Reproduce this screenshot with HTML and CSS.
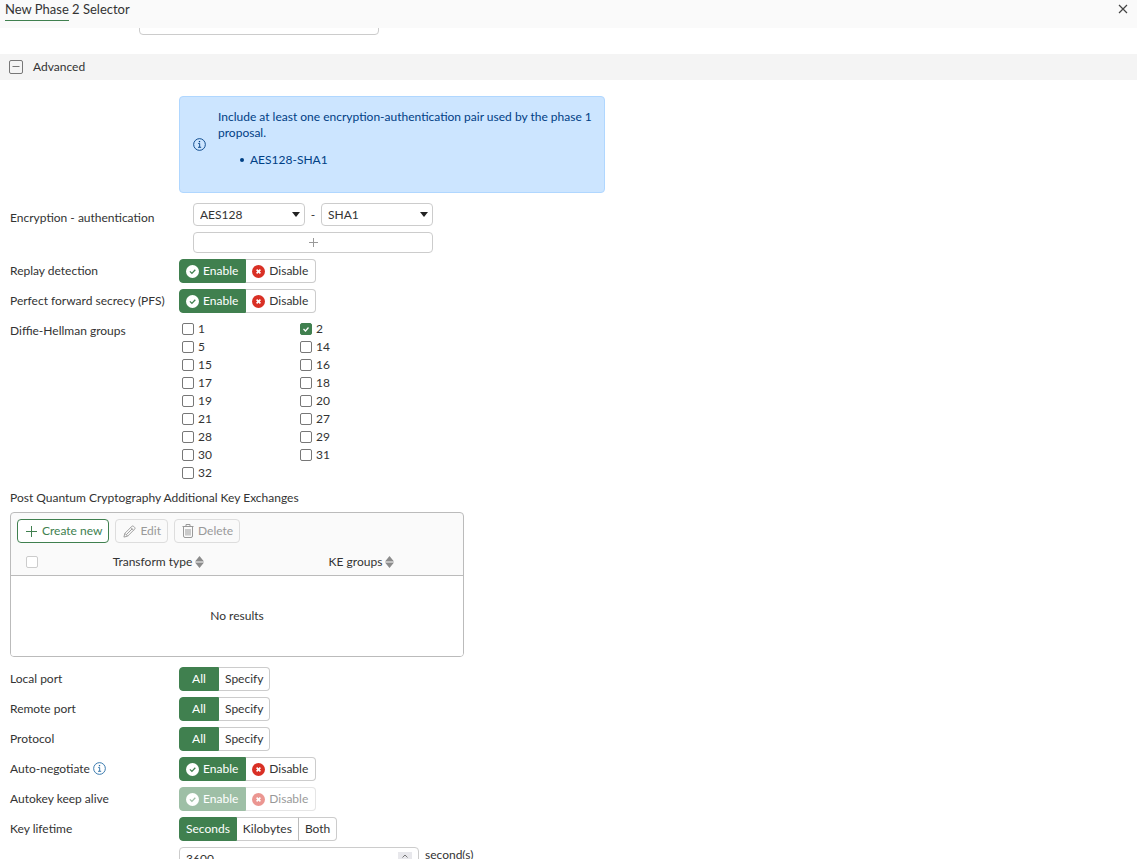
FILE: index.html
```html
<!DOCTYPE html>
<html lang="en">
<head>
<meta charset="utf-8">
<title>New Phase 2 Selector</title>
<link rel="stylesheet" href="styles.css">
</head>
<body>
<svg class="sprite" aria-hidden="true">
  <symbol id="i-ok" viewBox="0 0 13 13"><circle cx="6.5" cy="6.5" r="6.5" fill="#fff"/><path d="M3.9 6.4l2 2 3.400-3.600" fill="none" stroke="#40804f" stroke-width="1.300"/></symbol>
  <symbol id="i-no" viewBox="0 0 13 13"><circle cx="6.5" cy="6.5" r="6.5" fill="#d93025"/><path d="M4.600 4.600l3.800 3.800M8.400 4.600L4.600 8.400" fill="none" stroke="#fff" stroke-width="1.600"/></symbol>
  <symbol id="i-info" viewBox="0 0 14 14"><g fill="none" stroke="currentColor"><circle cx="7" cy="7" r="6.300"/><path d="M5.600 6h1.600v3.800M5.400 10h3.400"/></g><rect x="6.300" y="3.200" width="1.400" height="1.400" fill="currentColor"/></symbol>
  <symbol id="i-plus" viewBox="0 0 11 11"><path d="M5.500 0v11M0 5.500h11" stroke="currentColor" fill="none"/></symbol>
  <symbol id="i-sort" viewBox="0 0 9 12"><path d="M4.500 0L9 5.500H0zM0 6.500h9L4.500 12z" fill="#8c8c8c"/></symbol>
</svg>

<header class="header">
  <h1 class="title">New Phase 2 Selector</h1>
  <button class="close" type="button" aria-label="Close"><svg width="10" height="10" viewBox="0 0 10 10"><path d="M1 1l8 8M9 1L1 9" stroke="#444" stroke-width="1.200" fill="none"/></svg></button>
</header>

<main class="scroll">
  <div class="previous"><input class="field" type="text" aria-label="Remote address"></div>

  <h2 class="section">
    <button class="section-toggle" type="button" aria-expanded="true"><svg width="14" height="14" viewBox="0 0 14 14" fill="none" stroke="#777"><rect x=".5" y=".5" width="13" height="13" rx="1.500"/><path d="M3.500 6.500h7"/></svg>Advanced</button>
  </h2>

  <form class="form">
    <div class="alert">
      <svg class="alert-icon" width="13" height="13"><use href="#i-info"/></svg>
      <div>
        <p class="alert-text">Include at least one encryption-authentication pair used by the phase 1 proposal.</p>
        <ul class="alert-list"><li>AES128-SHA1</li></ul>
      </div>
    </div>

    <div class="row">
      <span class="label proposal-label">Encryption - authentication</span>
      <div class="proposal">
        <div class="pair">
          <select class="select" aria-label="Encryption"><option>AES128</option></select>
          <span>-</span>
          <select class="select" aria-label="Authentication"><option>SHA1</option></select>
        </div>
        <button class="add" type="button" aria-label="Add proposal"><svg width="9" height="9" viewBox="0 0 9 9"><path d="M4.500 0v9M0 4.500h9" stroke="currentColor" fill="none"/></svg></button>
      </div>
    </div>

    <div class="row">
      <span class="label" id="l-replay">Replay detection</span>
      <div class="toggle" role="radiogroup" aria-labelledby="l-replay">
        <label class="option with-icon"><input type="radio" name="replay" checked><svg width="13" height="13"><use href="#i-ok"/></svg>Enable</label>
        <label class="option with-icon"><input type="radio" name="replay"><svg width="13" height="13"><use href="#i-no"/></svg>Disable</label>
      </div>
    </div>
    <div class="row">
      <span class="label" id="l-pfs">Perfect forward secrecy (PFS)</span>
      <div class="toggle" role="radiogroup" aria-labelledby="l-pfs">
        <label class="option with-icon"><input type="radio" name="pfs" checked><svg width="13" height="13"><use href="#i-ok"/></svg>Enable</label>
        <label class="option with-icon"><input type="radio" name="pfs"><svg width="13" height="13"><use href="#i-no"/></svg>Disable</label>
      </div>
    </div>
    <div class="row">
      <span class="label" id="l-dh">Diffie-Hellman groups</span>
      <div class="groups" role="group" aria-labelledby="l-dh">
        <label class="group"><input class="check" type="checkbox">1</label>
        <label class="group"><input class="check" type="checkbox" checked>2</label>
        <label class="group"><input class="check" type="checkbox">5</label>
        <label class="group"><input class="check" type="checkbox">14</label>
        <label class="group"><input class="check" type="checkbox">15</label>
        <label class="group"><input class="check" type="checkbox">16</label>
        <label class="group"><input class="check" type="checkbox">17</label>
        <label class="group"><input class="check" type="checkbox">18</label>
        <label class="group"><input class="check" type="checkbox">19</label>
        <label class="group"><input class="check" type="checkbox">20</label>
        <label class="group"><input class="check" type="checkbox">21</label>
        <label class="group"><input class="check" type="checkbox">27</label>
        <label class="group"><input class="check" type="checkbox">28</label>
        <label class="group"><input class="check" type="checkbox">29</label>
        <label class="group"><input class="check" type="checkbox">30</label>
        <label class="group"><input class="check" type="checkbox">31</label>
        <label class="group"><input class="check" type="checkbox">32</label>
      </div>
    </div>

    <h3 class="subheading">Post Quantum Cryptography Additional Key Exchanges</h3>
    <div class="panel">
      <div class="toolbar">
        <button class="tool primary" type="button"><svg width="11" height="11"><use href="#i-plus"/></svg>Create new</button>
        <button class="tool" type="button" disabled><svg width="13" height="13" viewBox="0 0 14 14" fill="none" stroke="currentColor"><path d="M1 13l1-4L9.500 1.500q1-1 2 0l1 1q1 1 0 2L5 12zM8.300 2.700l3 3M2 9l3 3M3.500 10.500L10 4"/></svg>Edit</button>
        <button class="tool" type="button" disabled><svg width="12" height="14" viewBox="0 0 12 14" fill="none" stroke="currentColor"><path d="M.5 2.500h11M4 2.500v-2h4v2M1.500 3v9q0 1.500 1.500 1.500h6q1.500 0 1.500-1.500V3M4 5v6.500M6 5v6.500M8 5v6.500"/></svg>Delete</button>
      </div>
      <table class="table">
        <colgroup><col class="col-check"><col><col></colgroup>
        <thead><tr>
          <th class="check-cell"><input class="check" type="checkbox" aria-label="Select all" disabled></th>
          <th>Transform type <svg width="9" height="12"><use href="#i-sort"/></svg></th>
          <th>KE groups <svg width="9" height="12"><use href="#i-sort"/></svg></th>
        </tr></thead>
        <tbody><tr><td class="empty" colspan="3">No results</td></tr></tbody>
      </table>
    </div>

    <div class="row">
      <span class="label" id="l-local">Local port</span>
      <div class="toggle" role="radiogroup" aria-labelledby="l-local">
        <label class="option short"><input type="radio" name="local" checked>All</label>
        <label class="option"><input type="radio" name="local">Specify</label>
      </div>
    </div>
    <div class="row">
      <span class="label" id="l-remote">Remote port</span>
      <div class="toggle" role="radiogroup" aria-labelledby="l-remote">
        <label class="option short"><input type="radio" name="remote" checked>All</label>
        <label class="option"><input type="radio" name="remote">Specify</label>
      </div>
    </div>
    <div class="row">
      <span class="label" id="l-protocol">Protocol</span>
      <div class="toggle" role="radiogroup" aria-labelledby="l-protocol">
        <label class="option short"><input type="radio" name="protocol" checked>All</label>
        <label class="option"><input type="radio" name="protocol">Specify</label>
      </div>
    </div>
    <div class="row">
      <span class="label" id="l-auto">Auto-negotiate <svg class="hint" width="13" height="13"><use href="#i-info"/></svg></span>
      <div class="toggle" role="radiogroup" aria-labelledby="l-auto">
        <label class="option with-icon"><input type="radio" name="auto" checked><svg width="13" height="13"><use href="#i-ok"/></svg>Enable</label>
        <label class="option with-icon"><input type="radio" name="auto"><svg width="13" height="13"><use href="#i-no"/></svg>Disable</label>
      </div>
    </div>
    <div class="row">
      <span class="label" id="l-keep">Autokey keep alive</span>
      <div class="toggle disabled" role="radiogroup" aria-labelledby="l-keep">
        <label class="option with-icon"><input type="radio" name="keep" checked disabled><svg width="13" height="13"><use href="#i-ok"/></svg>Enable</label>
        <label class="option with-icon"><input type="radio" name="keep" disabled><svg width="13" height="13"><use href="#i-no"/></svg>Disable</label>
      </div>
    </div>
    <div class="row">
      <span class="label" id="l-life">Key lifetime</span>
      <div class="toggle" role="radiogroup" aria-labelledby="l-life">
        <label class="option"><input type="radio" name="life" checked>Seconds</label>
        <label class="option"><input type="radio" name="life">Kilobytes</label>
        <label class="option"><input type="radio" name="life">Both</label>
      </div>
    </div>
    <div class="row">
      <span class="label"></span>
      <div class="duration">
        <div class="number">
          <input class="number-input" id="seconds" type="number" value="3600">
          <button class="step" type="button" aria-label="Increase"><svg width="6" height="4" viewBox="0 0 6 4"><path d="M.5 3.500L3 1l2.500 2.500" fill="none" stroke="#777"/></svg></button>
        </div>
        <label for="seconds">second(s)</label>
      </div>
    </div>
  </form>
</main>
</body>
</html>
```
FILE: styles.css
```css
* { box-sizing: border-box; }

body {
  margin: 0;
  height: 100vh;
  display: flex;
  flex-direction: column;
  overflow: hidden;
  background: #fff;
  color: #333;
  font: 12px/16px Lato, "Liberation Sans", sans-serif;
}

button, input, select { font: inherit; color: inherit; margin: 0; }
svg { flex: none; }
.sprite { display: none; }

.header {
  flex: none;
  display: flex;
  justify-content: space-between;
  align-items: flex-start;
  height: 28px;
  padding: 0 9px 0 5px;
  background: #fafafa;
}
.title { margin: 0; font-size: 13px; line-height: 18px; font-weight: 400; }
.title::after {
  content: "";
  display: block;
  width: 64px;
  margin-top: 2px;
  border-bottom: 1px solid #40804f;
}
.close {
  display: flex;
  padding: 4px 0;
  border: 0;
  background: none;
}

.scroll { flex: 1; min-height: 0; overflow: hidden; }
.previous { display: flex; margin: -17px 0 19px 139px; }
.field {
  width: 240px;
  height: 24px;
  border: 1px solid #ccc;
  border-radius: 4px;
}

.section { margin: 0; padding: 0 9px; background: #f4f4f4; font-size: 12px; font-weight: 400; }
.section-toggle {
  display: flex;
  align-items: center;
  gap: 10px;
  height: 26px;
  padding: 0;
  border: 0;
  background: none;
}

.form { padding: 16px 10px 0; }

.alert {
  display: flex;
  align-items: center;
  gap: 12px;
  max-width: 426px;
  margin: 0 0 10px 169px;
  padding: 12px 8px 12px 13px;
  border: 1px solid #b0d7ff;
  border-radius: 4px;
  background: #cce5ff;
  color: #004085;
}
.alert-text { margin: 0; }
.alert-list { margin: 11px 0 12px; padding-left: 22px; list-style: none; }
.alert-list li { display: flex; align-items: center; gap: 6px; }
.alert-list li::before {
  content: "";
  width: 4px;
  height: 4px;
  border-radius: 50%;
  background: currentColor;
}

.row { display: flex; margin-bottom: 6px; }
.label { flex: none; width: 169px; padding: 4px 0; }
.hint { vertical-align: -2px; color: #2a6fa8; }

.proposal-label { width: 183px; padding-top: 7px; }
.proposal { display: flex; flex-direction: column; gap: 6px; width: 240px; }
.pair { display: flex; justify-content: space-between; align-items: center; }
.select {
  appearance: none;
  width: 112px;
  height: 23px;
  padding: 0 6px;
  border: 1px solid #ccc;
  border-radius: 4px;
  background: #fff url("data:image/svg+xml,%3Csvg xmlns='http://www.w3.org/2000/svg' width='8' height='5'%3E%3Cpath d='M0 0h8L4 5z' fill='%23222'/%3E%3C/svg%3E") no-repeat right 4px center;
}
.add {
  display: flex;
  align-items: center;
  justify-content: center;
  height: 21px;
  border: 1px solid #ccc;
  border-radius: 4px;
  background: #fff;
  color: #999;
}

.toggle { display: flex; height: 24px; }
.option {
  display: flex;
  align-items: center;
  justify-content: center;
  gap: 4px;
  padding: 0 6px;
  border: 1px solid #ccc;
  border-left-width: 0;
  background: #fff;
}
.with-icon { padding-right: 7px; }
.option + .option:not(:last-child) { border-right-color: #bbb; }
.option:first-child { border-left-width: 1px; border-radius: 4px 0 0 4px; }
.option:last-child { border-radius: 0 4px 4px 0; }
.option:has(:checked) { border-color: #40804f; background: #40804f; color: #fff; }
.option input { appearance: none; position: absolute; }
.short { width: 40px; }
.disabled { opacity: .5; }

.groups {
  display: grid;
  grid-template-columns: 118px 118px;
  grid-auto-rows: 18px;
  padding: 1px 0 2px 3px;
}
.group { display: flex; align-items: center; gap: 4px; }
.check {
  appearance: none;
  flex: none;
  width: 12px;
  height: 12px;
  border: 1px solid #777;
  border-radius: 2px;
  background: #fff;
}
.check:checked {
  border-color: #40804f;
  background: #40804f url("data:image/svg+xml,%3Csvg xmlns='http://www.w3.org/2000/svg' width='8' height='8'%3E%3Cpath d='M1.500 4l2 2 3-3.500' fill='none' stroke='%23fff' stroke-width='1.300'/%3E%3C/svg%3E") no-repeat center;
}
.check:disabled { border-color: #ccc; }

.subheading { margin: 0 0 6px; font-size: 12px; font-weight: 400; }
.panel {
  max-width: 454px;
  margin-bottom: 10px;
  border: 1px solid #bbb;
  border-radius: 4px;
  background: #fafafa;
  overflow: hidden;
}
.toolbar { display: flex; gap: 6px; padding: 6px; }
.tool {
  display: flex;
  align-items: center;
  gap: 4px;
  height: 24px;
  padding: 0 6px 0 7px;
  border: 1px solid #ddd;
  border-radius: 4px;
  background: #fafafa;
  color: #999;
}
.primary { gap: 5px; padding-left: 8px; border-color: #40804f; background: #fff; color: #40804f; }
.table { width: 100%; table-layout: fixed; border-collapse: collapse; }
.col-check { width: 46px; }
.table th { height: 26px; padding: 0; border-bottom: 1px solid #bbb; font-weight: 400; }
.table th svg { vertical-align: -2px; }
.table .check-cell { padding-left: 15px; text-align: left; }
.check-cell .check { display: block; }
.empty { height: 81px; padding: 0; background: #fff; text-align: center; }

.duration { display: flex; gap: 6px; }
.number {
  display: flex;
  width: 240px;
  height: 24px;
  padding: 0 6px;
  border: 1px solid #ccc;
  border-radius: 4px;
}
.number-input {
  appearance: textfield;
  flex: 1;
  min-width: 0;
  padding: 0;
  border: 0;
  background: none;
}
.number-input::-webkit-inner-spin-button { display: none; }
.step {
  display: flex;
  justify-content: center;
  width: 14px;
  height: 8px;
  margin-top: 4px;
  padding: 2px 0;
  border: 0;
  background: #e8e8ec;
}
```
